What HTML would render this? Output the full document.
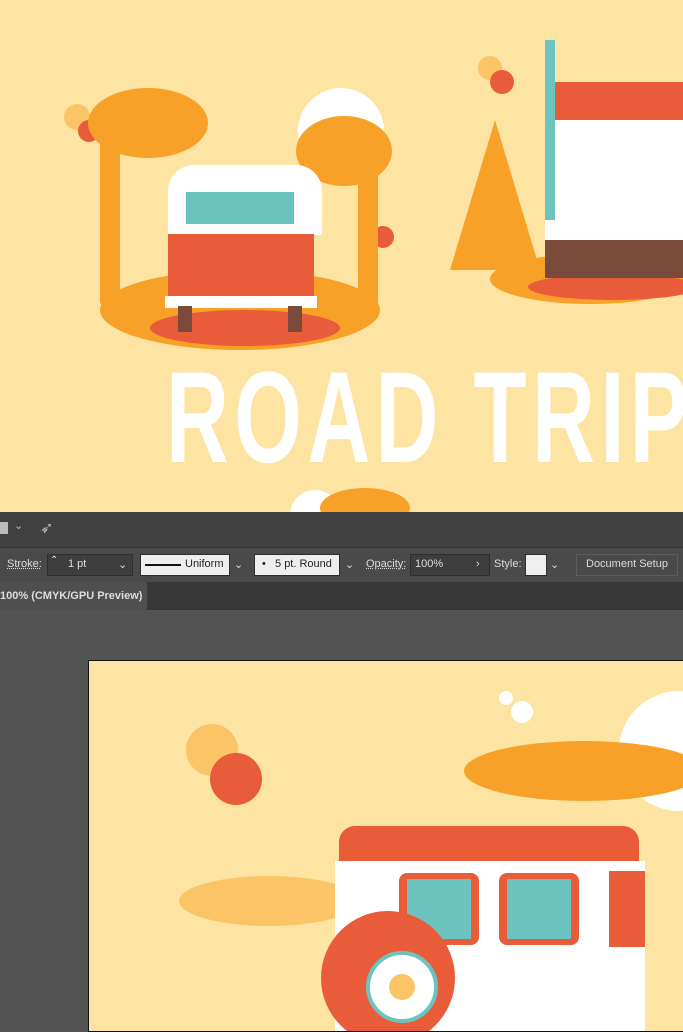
<!DOCTYPE html><html><head><style>
body{margin:0;width:683px;height:1024px;overflow:hidden;position:relative;font-family:"Liberation Sans",sans-serif;background:#535353}
.a{position:absolute}
.c{position:absolute;border-radius:50%}
.t{position:absolute;font-size:11px;color:#ddd;top:558px}
.box{position:absolute;top:554px;height:20px;background:#3d3d3d;border:1px solid #2e2e2e}
</style></head><body>
<div class="a" style="left:0;top:0;width:683px;height:512px;background:#fde4a2;overflow:hidden">
 <div class="c" style="left:298px;top:88px;width:86px;height:86px;background:#fff"></div>
 <div class="c" style="left:64px;top:104px;width:26px;height:26px;background:#fbc466"></div>
 <div class="c" style="left:78px;top:120px;width:22px;height:22px;background:#e85c3a"></div>
 <div class="c" style="left:478px;top:56px;width:24px;height:24px;background:#fbc466"></div>
 <div class="c" style="left:490px;top:70px;width:24px;height:24px;background:#e85c3a"></div>
 <div class="c" style="left:372px;top:226px;width:22px;height:22px;background:#e85c3a"></div>
 <div class="c" style="left:100px;top:270px;width:280px;height:80px;background:#f7a128"></div>
 <div class="c" style="left:150px;top:310px;width:190px;height:36px;background:#e85c3a"></div>
 <div class="a" style="left:100px;top:120px;width:20px;height:190px;background:#f7a128;border-radius:10px"></div>
 <div class="a" style="left:358px;top:150px;width:20px;height:160px;background:#f7a128;border-radius:10px"></div>
 <div class="c" style="left:88px;top:88px;width:120px;height:70px;background:#f7a128"></div>
 <div class="c" style="left:296px;top:116px;width:96px;height:70px;background:#f7a128"></div>
 <div class="a" style="left:168px;top:165px;width:154px;height:70px;background:#fff;border-radius:26px 26px 0 0"></div>
 <div class="a" style="left:186px;top:192px;width:108px;height:32px;background:#6cc3c0"></div>
 <div class="a" style="left:168px;top:234px;width:146px;height:66px;background:#e85c3a"></div>
 <div class="a" style="left:165px;top:296px;width:152px;height:12px;background:#fff"></div>
 <div class="a" style="left:178px;top:306px;width:14px;height:26px;background:#7a4a3a"></div>
 <div class="a" style="left:288px;top:306px;width:14px;height:26px;background:#7a4a3a"></div>
 <div class="c" style="left:490px;top:254px;width:200px;height:50px;background:#f7a128"></div>
 <div class="c" style="left:528px;top:274px;width:170px;height:26px;background:#e85c3a"></div>
 <div class="a" style="left:450px;top:120px;width:90px;height:150px;background:#f7a128;clip-path:polygon(50% 0,100% 100%,0 100%)"></div>
 <div class="a" style="left:555px;top:82px;width:128px;height:40px;background:#e85c3a"></div>
 <div class="a" style="left:555px;top:120px;width:128px;height:80px;background:#fff"></div>
 <div class="a" style="left:545px;top:200px;width:138px;height:50px;background:#fff"></div>
 <div class="a" style="left:545px;top:240px;width:138px;height:38px;background:#7a4a3a"></div>
 <div class="a" style="left:545px;top:40px;width:10px;height:180px;background:#6cc3c0"></div>
 <div class="a" style="left:166px;top:352px;font-size:130px;line-height:130px;font-weight:bold;color:#fff;letter-spacing:8px;white-space:nowrap;transform:scaleX(.67);transform-origin:left">ROAD TRIP</div>
 <div class="c" style="left:290px;top:490px;width:50px;height:50px;background:#fff"></div>
 <div class="c" style="left:320px;top:488px;width:90px;height:40px;background:#f7a128"></div>
</div>
<div class="a" style="left:0;top:512px;width:683px;height:35px;background:#404040"></div>
<div class="a" style="left:0;top:522px;width:8px;height:12px;background:#bbb"></div>
<div class="a" style="left:14px;top:519px;color:#bbb;font-size:11px">⌄</div>
<div class="a" style="left:40px;top:518px;color:#bbb;font-size:16px">➶</div>
<div class="a" style="left:0;top:547px;width:683px;height:35px;background:#4a4a4a;border-top:1px solid #333"></div>
<span class="t" style="left:7px;text-decoration:underline dotted">Stroke:</span>
<div class="box" style="left:47px;width:84px"></div><span class="t" style="left:68px">1 pt</span><span class="t" style="left:50px;top:555px;font-size:10px">⌃</span><span class="t" style="left:118px">⌄</span>
<div class="box" style="left:140px;width:88px;background:#eee"></div><div class="a" style="left:145px;top:564px;width:36px;height:2px;background:#111"></div><span class="t" style="left:185px;color:#222">Uniform</span><span class="t" style="left:234px">⌄</span>
<div class="box" style="left:254px;width:84px;background:#eee"></div><span class="t" style="left:262px;color:#222">•&nbsp;&nbsp; 5 pt. Round</span><span class="t" style="left:345px">⌄</span>
<span class="t" style="left:366px;text-decoration:underline dotted">Opacity:</span><div class="box" style="left:410px;width:78px"></div><span class="t" style="left:415px">100%</span><span class="t" style="left:476px">›</span>
<span class="t" style="left:494px">Style:</span><div class="box" style="left:525px;width:20px;background:#eee"></div><span class="t" style="left:550px">⌄</span>
<div class="box" style="left:576px;width:100px;background:#4a4a4a;border-color:#5e5e5e"></div><span class="t" style="left:586px">Document Setup</span>
<div class="a" style="left:0;top:582px;width:683px;height:28px;background:#383838"></div>
<div class="a" style="left:0;top:582px;width:147px;height:28px;background:#4f4f4f;color:#ddd;font-size:11px;font-weight:bold;line-height:28px">100% (CMYK/GPU Preview)</div>
<div class="a" style="left:88px;top:660px;width:600px;height:370px;background:#fde4a2;border:1px solid #111;overflow:hidden">
 <div class="c" style="left:530px;top:30px;width:120px;height:120px;background:#fff"></div>
 <div class="c" style="left:410px;top:30px;width:14px;height:14px;background:#fff"></div>
 <div class="c" style="left:422px;top:40px;width:22px;height:22px;background:#fff"></div>
 <div class="c" style="left:97px;top:63px;width:52px;height:52px;background:#fbc466"></div>
 <div class="c" style="left:121px;top:92px;width:52px;height:52px;background:#e85c3a"></div>
 <div class="c" style="left:375px;top:80px;width:240px;height:60px;background:#f7a128"></div>
 <div class="c" style="left:90px;top:215px;width:180px;height:50px;background:#fbc466"></div>
 <div class="a" style="left:250px;top:165px;width:300px;height:40px;background:#e85c3a;border-radius:16px 16px 0 0"></div>
 <div class="a" style="left:246px;top:200px;width:310px;height:170px;background:#fff"></div>
 <div class="a" style="left:310px;top:212px;width:80px;height:72px;background:#e85c3a;border-radius:8px"></div>
 <div class="a" style="left:318px;top:218px;width:64px;height:60px;background:#6cc3c0"></div>
 <div class="a" style="left:410px;top:212px;width:80px;height:72px;background:#e85c3a;border-radius:8px"></div>
 <div class="a" style="left:418px;top:218px;width:64px;height:60px;background:#6cc3c0"></div>
 <div class="a" style="left:520px;top:210px;width:36px;height:76px;background:#e85c3a"></div>
 <div class="c" style="left:232px;top:250px;width:134px;height:134px;background:#e85c3a"></div>
 <div class="c" style="left:277px;top:290px;width:72px;height:72px;background:#fff;border:4px solid #6cc3c0;box-sizing:border-box"></div>
 <div class="c" style="left:300px;top:313px;width:26px;height:26px;background:#fbc466"></div>
</div>
</body></html>
